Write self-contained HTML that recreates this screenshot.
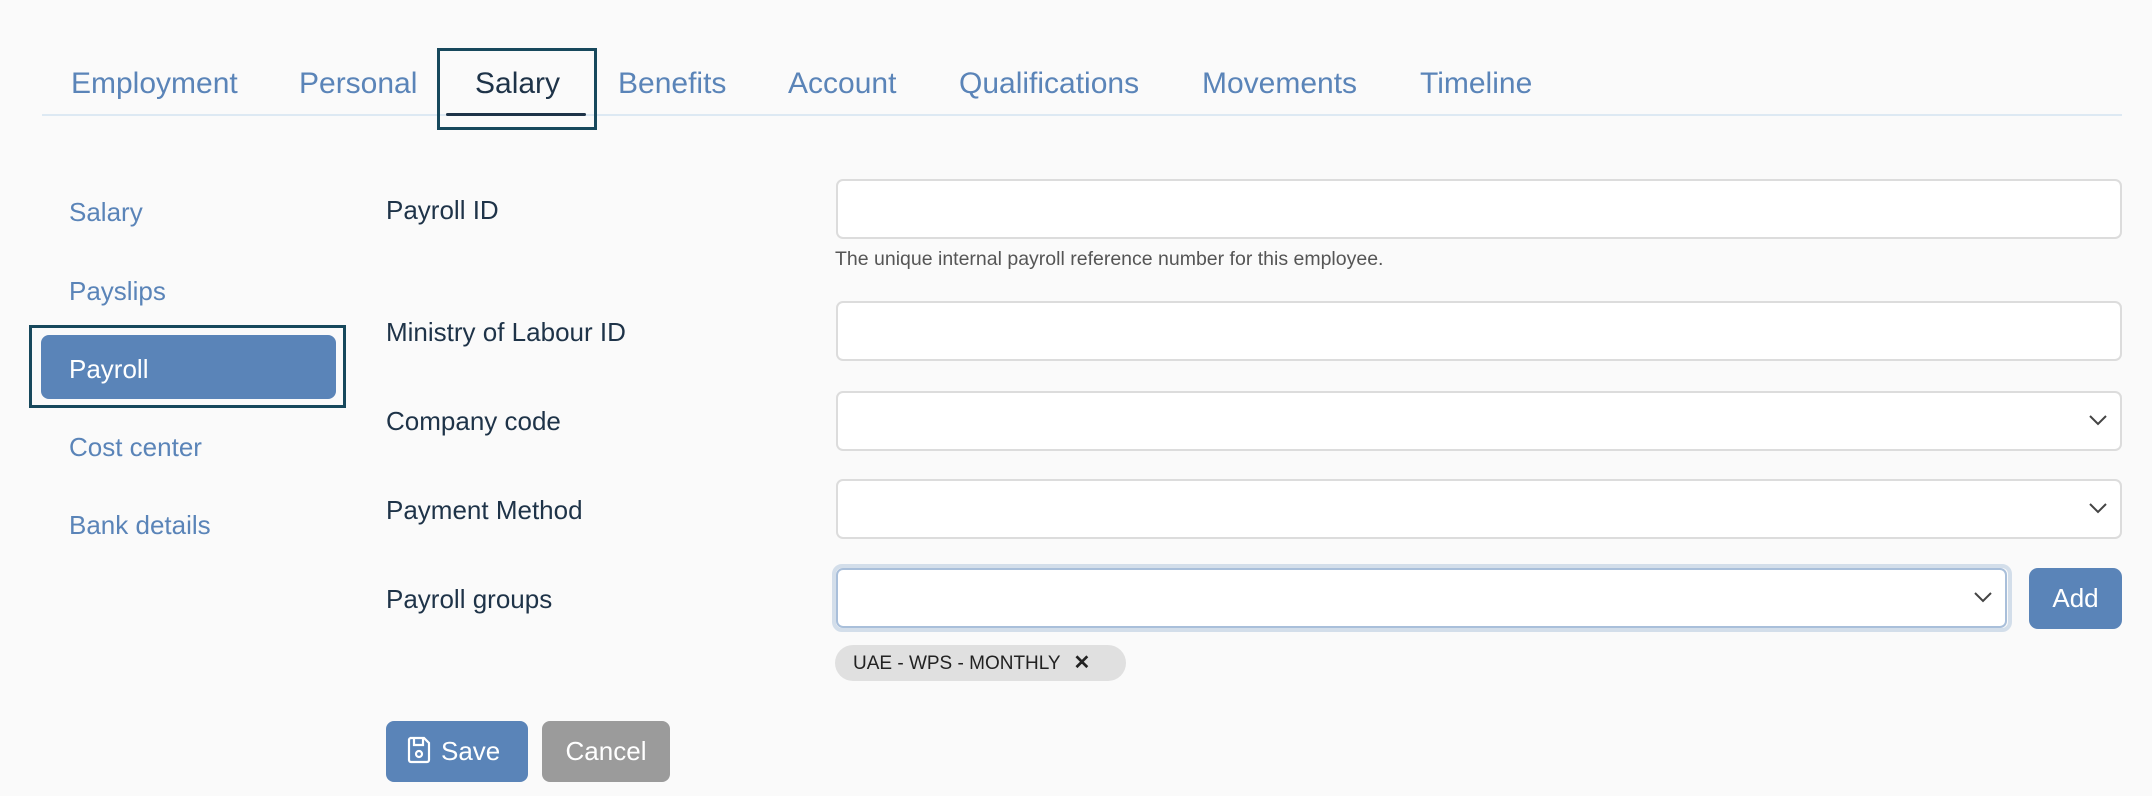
<!DOCTYPE html>
<html><head><meta charset="utf-8"><style>
*{box-sizing:border-box;margin:0;padding:0}
body{width:2152px;height:796px;background:#fafafa;font-family:"Liberation Sans",sans-serif;position:relative;overflow:hidden}
.a{position:absolute;white-space:nowrap}
.tab{font-size:30px;color:#5a84b8;top:66px;line-height:36px}
.side{font-size:26px;color:#5a84b8;line-height:30px;left:69px}
.lbl{font-size:26px;color:#1e3348;line-height:30px;left:386px}
.inp{left:836px;width:1286px;height:60px;background:#fff;border:2px solid #dcdcdc;border-radius:7px}
.chev{position:absolute;right:12px;top:20px}
</style></head><body>
<div class="a tab" style="left:71px">Employment</div>
<div class="a tab" style="left:299px">Personal</div>
<div class="a tab" style="left:475px;color:#1e3348">Salary</div>
<div class="a tab" style="left:618px">Benefits</div>
<div class="a tab" style="left:788px">Account</div>
<div class="a tab" style="left:959px">Qualifications</div>
<div class="a tab" style="left:1202px">Movements</div>
<div class="a tab" style="left:1420px">Timeline</div>
<div class="a" style="left:42px;top:114px;width:2080px;height:2px;background:#dde9f3"></div>
<div class="a" style="left:437px;top:48px;width:160px;height:82px;border:3px solid #17485c"></div>
<div class="a" style="left:446px;top:113px;width:140px;height:3px;background:#1e3348;border-radius:2px"></div>

<div class="a side" style="top:197px">Salary</div>
<div class="a side" style="top:276px">Payslips</div>
<div class="a" style="left:29px;top:325px;width:317px;height:83px;border:3px solid #17485c"></div>
<div class="a" style="left:41px;top:335px;width:295px;height:64px;background:#5a84b8;border-radius:8px"></div>
<div class="a side" style="top:354px;color:#fff">Payroll</div>
<div class="a side" style="top:432px">Cost center</div>
<div class="a side" style="top:510px">Bank details</div>

<div class="a lbl" style="top:195px">Payroll ID</div>
<div class="a lbl" style="top:317px">Ministry of Labour ID</div>
<div class="a lbl" style="top:406px">Company code</div>
<div class="a lbl" style="top:495px">Payment Method</div>
<div class="a lbl" style="top:584px">Payroll groups</div>

<div class="a inp" style="top:179px"></div>
<div class="a" style="left:835px;top:248px;font-size:19.5px;color:#555">The unique internal payroll reference number for this employee.</div>
<div class="a inp" style="top:301px"></div>
<div class="a inp" style="top:391px"><svg class="chev" width="20" height="14" viewBox="0 0 20 14"><path d="M2 3l8 8 8-8" fill="none" stroke="#444" stroke-width="2"/></svg></div>
<div class="a inp" style="top:479px"><svg class="chev" width="20" height="14" viewBox="0 0 20 14"><path d="M2 3l8 8 8-8" fill="none" stroke="#444" stroke-width="2"/></svg></div>
<div class="a" style="left:832px;top:564px;width:1180px;height:68px;border:4px solid #d3deea;border-radius:10px"></div>
<div class="a inp" style="top:568px;width:1171px;border-color:#a9bfda"><svg class="chev" width="20" height="14" viewBox="0 0 20 14"><path d="M2 3l8 8 8-8" fill="none" stroke="#444" stroke-width="2"/></svg></div>
<div class="a" style="left:2029px;top:568px;width:93px;height:61px;background:#5a84b8;border-radius:9px;color:#fff;font-size:26px;text-align:center;line-height:61px">Add</div>

<div class="a" style="left:835px;top:645px;width:291px;height:36px;background:#e0e0e0;border-radius:18px;font-size:19px;color:#222;line-height:36px;padding-left:18px">UAE - WPS - MONTHLY <b style="margin-left:8px;font-size:20px">✕</b></div>

<div class="a" style="left:386px;top:721px;width:142px;height:61px;background:#5a84b8;border-radius:8px;color:#fff;font-size:26px;line-height:61px;padding-left:21px">
<svg width="24" height="28" viewBox="0 0 24 28" style="vertical-align:-4px;margin-right:10px"><path d="M3 2h14l5 5v17a2 2 0 0 1-2 2H4a2 2 0 0 1-2-2V4a2 2 0 0 1 2-2z" fill="none" stroke="#fff" stroke-width="2.2"/><path d="M7 2v7h9V2" fill="none" stroke="#fff" stroke-width="2.2"/><circle cx="12" cy="18" r="3" fill="none" stroke="#fff" stroke-width="2.2"/></svg>Save</div>
<div class="a" style="left:542px;top:721px;width:128px;height:61px;background:#9b9b9b;border-radius:8px;color:#fff;font-size:26px;line-height:61px;text-align:center">Cancel</div>
</body></html>
